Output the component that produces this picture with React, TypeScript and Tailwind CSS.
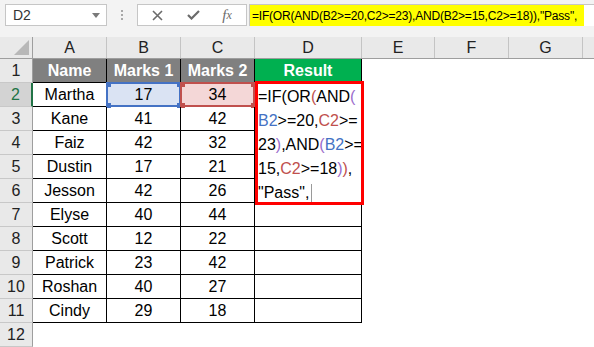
import React from "react";

const COLS = [
  { key: "A", w: "w-[74px]" },
  { key: "B", w: "w-[74px]" },
  { key: "C", w: "w-[74px]" },
  { key: "D", w: "w-[107px]" },
  { key: "E", w: "w-[73px]" },
  { key: "F", w: "w-[74px]" },
  { key: "G", w: "w-[74px]" },
];

const DATA: [string, number, number][] = [
  ["Martha", 17, 34],
  ["Kane", 41, 42],
  ["Faiz", 42, 32],
  ["Dustin", 17, 21],
  ["Jesson", 42, 26],
  ["Elyse", 40, 44],
  ["Scott", 12, 22],
  ["Patrick", 23, 42],
  ["Roshan", 40, 27],
  ["Cindy", 29, 18],
];

const BLUE = "text-[#4472c4]";
const RED = "text-[#c0504d]";
const PURPLE = "text-[#9b6bcc]";

function Corners({ color }: { color: string }) {
  const sq = `absolute w-[5px] h-[5px] ${color}`;
  return (
    <>
      <span className={`${sq} -left-[2px] -top-[2px]`} />
      <span className={`${sq} -right-[3px] -top-[2px]`} />
      <span className={`${sq} -left-[2px] -bottom-[3px]`} />
      <span className={`${sq} -right-[3px] -bottom-[3px]`} />
    </>
  );
}

function Toolbar() {
  return (
    <div className="h-[37px] bg-[#f3f3f3] flex items-start pt-[4px]">
      {/* Name box */}
      <div className="ml-[5px] w-[102px] h-[22px] border border-[#c6c6c6] bg-white flex items-center pl-[7px] pr-[6px] text-[14px] text-[#333]">
        <span className="flex-1">D2</span>
        <svg width="8" height="5" viewBox="0 0 8 5">
          <path d="M0 0 L8 0 L4 5 Z" fill="#7a7a7a" />
        </svg>
      </div>
      {/* grip dots */}
      <div className="w-[30px] flex flex-col items-center gap-[2px] pt-[6px]">
        <span className="w-[2px] h-[2px] bg-[#a8a8a8]" />
        <span className="w-[2px] h-[2px] bg-[#a8a8a8]" />
        <span className="w-[2px] h-[2px] bg-[#a8a8a8]" />
      </div>
      {/* cancel / enter / fx */}
      <div className="w-[110px] h-[22px] border border-[#c6c6c6] bg-white flex items-center text-[#6b6b6b]">
        <div className="w-[38px] flex justify-center">
          <svg width="11" height="11" viewBox="0 0 11 11">
            <path d="M1 1 L10 10 M10 1 L1 10" stroke="#6b6b6b" strokeWidth="1.6" />
          </svg>
        </div>
        <div className="w-[34px] flex justify-center">
          <svg width="13" height="10" viewBox="0 0 13 10">
            <path d="M1 5 L4.5 8.5 L12 1" stroke="#6b6b6b" strokeWidth="2.2" fill="none" />
          </svg>
        </div>
        <div className="w-[34px] flex justify-center italic font-['Liberation_Serif',serif] text-[15px] leading-none">
          f<span className="text-[12px] relative top-[1px]">x</span>
        </div>
      </div>
      {/* formula input */}
      <div className="ml-[2px] flex-1 h-[22px] border-t border-l border-[#c6c6c6] bg-white flex items-stretch">
        <div className="w-[334px] bg-[#ffff00] flex items-center pl-[2px] text-[12px] tracking-[-0.2px] text-black whitespace-nowrap">
          =IF(OR(AND(B2&gt;=20,C2&gt;=23),AND(B2&gt;=15,C2&gt;=18)),"Pass",
        </div>
      </div>
    </div>
  );
}

function HeaderRow() {
  return (
    <div className="h-[22px] flex bg-[#e9e9e9] border-b border-[#9e9e9e]">
      <div className="w-[33px] shrink-0 border-r border-[#9e9e9e] relative">
        <svg className="absolute right-[3px] bottom-[3px]" width="15" height="15" viewBox="0 0 15 15">
          <path d="M15 0 L15 15 L0 15 Z" fill="#b8b8b8" />
        </svg>
      </div>
      {COLS.map((c) => (
        <div
          key={c.key}
          className={`${c.w} shrink-0 border-r border-[#c4c4c4] flex items-center justify-center text-[16px] text-[#222]`}
        >
          {c.key}
        </div>
      ))}
      <div className="flex-1" />
    </div>
  );
}

function RowHead({ n, active }: { n: number; active?: boolean }) {
  return (
    <div
      className={`w-[33px] shrink-0 flex items-center justify-center border-b border-[#c8c8c8] ${
        active
          ? "bg-[#d3d3d3] text-[#217346] border-r-2 border-r-[#217346]"
          : "bg-[#e9e9e9] text-[#222] border-r border-r-[#9e9e9e]"
      }`}
    >
      {n}
    </div>
  );
}

function Cell({
  w,
  className = "",
  children,
}: {
  w: string;
  className?: string;
  children?: React.ReactNode;
}) {
  return (
    <div
      className={`${w} shrink-0 relative border-r border-b border-black flex items-center justify-center ${className}`}
    >
      {children}
    </div>
  );
}

function Blank({ w }: { w: string }) {
  return <div className={`${w} shrink-0`} />;
}

function Editor() {
  return (
    <div className="absolute left-[255px] top-[81px] w-[109px] h-[124px] border-[3px] border-[#ff0000] bg-white text-[16px] leading-[24px] text-black whitespace-nowrap overflow-hidden">
      <div className="pt-[1px]">
        =IF(OR<span className={RED}>(</span>AND<span className={PURPLE}>(</span>
      </div>
      <div>
        <span className={BLUE}>B2</span>&gt;=20,<span className={RED}>C2</span>&gt;=
      </div>
      <div>
        23<span className={PURPLE}>)</span>,AND<span className={PURPLE}>(</span>
        <span className={BLUE}>B2</span>&gt;=
      </div>
      <div>
        15,<span className={RED}>C2</span>&gt;=18<span className={PURPLE}>)</span>
        <span className={RED}>)</span>,
      </div>
      <div className="flex items-center">
        "Pass",<span className="ml-[2px] w-px h-[19px] bg-[#9a9a9a]" />
      </div>
    </div>
  );
}

export default function App() {
  return (
    <div className="w-[594px] h-[347px] overflow-hidden bg-white relative font-['Liberation_Sans',Arial,sans-serif]">
      <Toolbar />
      <HeaderRow />
      <div className="text-[16px] text-black">
        {/* row 1: table header */}
        <div className="h-[24px] flex">
          <RowHead n={1} />
          <Cell w="w-[74px]" className="bg-[#808080] text-white font-bold">Name</Cell>
          <Cell w="w-[74px]" className="bg-[#808080] text-white font-bold">Marks 1</Cell>
          <Cell w="w-[74px]" className="bg-[#808080] text-white font-bold">Marks 2</Cell>
          <Cell w="w-[107px]" className="bg-[#00b050] text-white font-bold">Result</Cell>
        </div>
        {DATA.map(([name, m1, m2], i) => {
          const n = i + 2;
          const first = i === 0;
          return (
            <div key={name} className="h-[24px] flex">
              <RowHead n={n} active={first} />
              <Cell w="w-[74px]">{name}</Cell>
              <Cell w="w-[74px]" className={first ? "bg-[#dae3f3]" : ""}>
                {first && (
                  <span className="absolute -left-[1px] -top-[1px] w-[75px] h-[25px] border-2 border-[#4472c4]">
                    <Corners color="bg-[#4472c4]" />
                  </span>
                )}
                <span className="relative">{m1}</span>
              </Cell>
              <Cell w="w-[74px]" className={first ? "bg-[#f4d7d7]" : ""}>
                {first && (
                  <span className="absolute -left-[1px] -top-[1px] w-[75px] h-[25px] border-2 border-[#c0504d]">
                    <Corners color="bg-[#c0504d]" />
                  </span>
                )}
                <span className="relative">{m2}</span>
              </Cell>
              <Cell w="w-[107px]" />
            </div>
          );
        })}
        <div className="h-[24px] flex">
          <RowHead n={12} />
          <Blank w="w-[74px]" />
        </div>
      </div>
      <Editor />
    </div>
  );
}
